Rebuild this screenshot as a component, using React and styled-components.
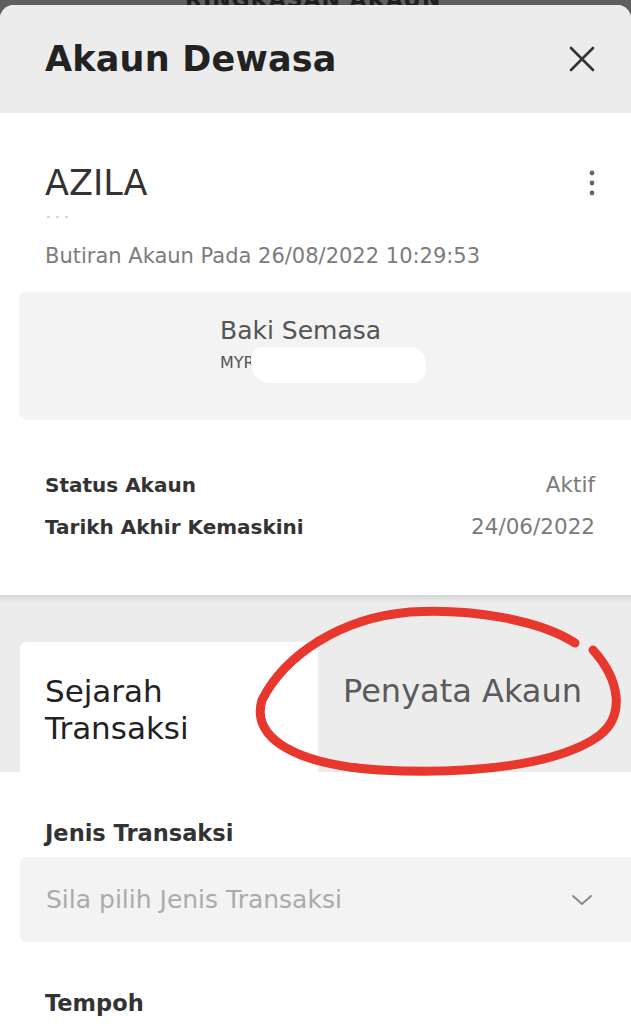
import styled, { createGlobalStyle } from "styled-components";

const GlobalStyle = createGlobalStyle`
  html, body {
    margin: 0;
    padding: 0;
    background: #5f5f5f;
  }
  * { box-sizing: border-box; }
`;

const Page = styled.div`
  width: 631px;
  height: 1024px;
  overflow: hidden;
  background: #5f5f5f;
  font-family: "DejaVu Sans", "Noto Sans", sans-serif;
  display: flex;
  flex-direction: column;
`;

const Backdrop = styled.div`
  height: 5px;
  flex: none;
  overflow: hidden;
  display: flex;
  align-items: flex-end;
  padding-left: 185px;
  color: #1e1e1e;
  font-weight: 700;
  font-size: 22px;
  line-height: 10px;
  letter-spacing: 1px;
`;

const Modal = styled.div`
  flex: 1;
  background: #fff;
  border-radius: 14px 14px 0 0;
  overflow: hidden;
`;

const Header = styled.div`
  height: 108px;
  background: #ececec;
  display: flex;
  align-items: center;
  justify-content: space-between;
  padding: 0 36px 0 45px;
`;

const Title = styled.h1`
  margin: 0;
  font-size: 35px;
  font-weight: 700;
  color: #222;
  letter-spacing: 0.2px;
`;

const IconButton = styled.button`
  border: none;
  background: none;
  padding: 0;
  display: flex;
  color: #333;
`;

const Summary = styled.section`
  padding: 50px 36px 0 45px;
`;

const NameRow = styled.div`
  display: flex;
  align-items: center;
  justify-content: space-between;
`;

const Name = styled.div`
  font-size: 35px;
  line-height: 40px;
  color: #333;
`;

const Redacted = styled.div`
  height: 28px;
  display: flex;
  align-items: center;
  gap: 6px;
  padding-left: 2px;
  span {
    width: 3px;
    height: 2px;
    background: #d8d8d8;
  }
`;

const Timestamp = styled.div`
  margin-top: 13px;
  font-size: 21px;
  line-height: 24px;
  color: #7c7c7c;
`;

const BalanceCard = styled.div`
  margin: 24px -60px 0 -25px;
  height: 126px;
  background: #f3f3f3;
  border-radius: 6px;
  box-shadow: 0 1px 3px rgba(0, 0, 0, 0.08);
  padding: 24px 0 0 200px;
`;

const BalanceLabel = styled.div`
  font-size: 25px;
  line-height: 30px;
  color: #555;
`;

const BalanceValue = styled.div`
  margin-top: 7px;
  display: flex;
  align-items: flex-start;
  font-size: 16px;
  line-height: 20px;
  color: #555;
`;

const WhiteOut = styled.span`
  display: inline-block;
  width: 175px;
  height: 36px;
  margin-left: -4px;
  margin-top: -6px;
  background: #fff;
  border-radius: 10px 16px 14px 20px;
`;

const InfoList = styled.div`
  padding: 55px 0 56px;
  display: flex;
  flex-direction: column;
  gap: 18px;
`;

const InfoRow = styled.div`
  display: flex;
  justify-content: space-between;
  align-items: baseline;
  line-height: 24px;
`;

const InfoLabel = styled.span`
  font-size: 20px;
  font-weight: 700;
  color: #333;
`;

const InfoValue = styled.span`
  font-size: 21.5px;
  color: #7a7a7a;
`;

const TabBar = styled.div`
  position: relative;
  background: #ececec;
  padding: 47px 0 0 20px;
  display: flex;
  box-shadow: inset 0 7px 6px -5px rgba(0, 0, 0, 0.14);
`;

const Tab = styled.div`
  width: ${(p) => (p.$active ? "298px" : "auto")};
  flex: ${(p) => (p.$active ? "none" : "1")};
  height: 130px;
  padding: 31px 25px 0;
  background: ${(p) => (p.$active ? "#fff" : "transparent")};
  border-radius: 6px 0 0 0;
  font-size: ${(p) => (p.$active ? "31px" : "32px")};
  line-height: 37px;
  color: ${(p) => (p.$active ? "#222" : "#5a5a5a")};
`;

const Scribble = styled.svg`
  position: absolute;
  left: 0;
  top: 0;
  pointer-events: none;
`;

const Form = styled.section`
  padding: 47px 0 0;
`;

const FieldLabel = styled.div`
  padding-left: 45px;
  font-size: 22.5px;
  font-weight: 700;
  color: #333;
  line-height: 28px;
`;

const Select = styled.div`
  margin: 10px 0 0 20px;
  height: 85px;
  background: #f3f3f3;
  border-radius: 6px 0 0 6px;
  display: flex;
  align-items: center;
  justify-content: space-between;
  padding: 0 38px 0 26px;
  font-size: 25px;
  color: #ababab;
`;

const Spacer = styled.div`
  height: ${(p) => p.$h}px;
`;

const CloseIcon = () => (
  <svg width="26" height="26" viewBox="0 0 26 26" fill="none" stroke="#333" strokeWidth="2.6" strokeLinecap="round">
    <path d="M2 2 L24 24 M24 2 L2 24" />
  </svg>
);

const DotsIcon = () => (
  <svg width="6" height="26" viewBox="0 0 6 26" fill="#666">
    <circle cx="3" cy="3" r="2.4" />
    <circle cx="3" cy="13" r="2.4" />
    <circle cx="3" cy="23" r="2.4" />
  </svg>
);

const Chevron = () => (
  <svg width="22" height="12" viewBox="0 0 22 12" fill="none" stroke="#8a8a8a" strokeWidth="2" strokeLinecap="round" strokeLinejoin="round">
    <path d="M2 2 L11 10 L20 2" />
  </svg>
);

export default function App() {
  return (
    <Page>
      <GlobalStyle />
      <Backdrop>RINGKASAN AKAUN</Backdrop>
      <Modal>
        <Header>
          <Title>Akaun Dewasa</Title>
          <IconButton aria-label="Tutup">
            <CloseIcon />
          </IconButton>
        </Header>

        <Summary>
          <NameRow>
            <Name>AZILA</Name>
            <IconButton aria-label="Menu">
              <DotsIcon />
            </IconButton>
          </NameRow>
          <Redacted>
            <span />
            <span />
            <span />
          </Redacted>
          <Timestamp>Butiran Akaun Pada 26/08/2022 10:29:53</Timestamp>

          <BalanceCard>
            <BalanceLabel>Baki Semasa</BalanceLabel>
            <BalanceValue>
              MYR
              <WhiteOut />
            </BalanceValue>
          </BalanceCard>

          <InfoList>
            <InfoRow>
              <InfoLabel>Status Akaun</InfoLabel>
              <InfoValue>Aktif</InfoValue>
            </InfoRow>
            <InfoRow>
              <InfoLabel>Tarikh Akhir Kemaskini</InfoLabel>
              <InfoValue>24/06/2022</InfoValue>
            </InfoRow>
          </InfoList>
        </Summary>

        <TabBar>
          <Tab $active>Sejarah Transaksi</Tab>
          <Tab>Penyata Akaun</Tab>
          <Scribble width="631" height="190" viewBox="0 595 631 190">
            <path
              d="M575 643 C540 620 470 608 410 612 C340 618 285 655 262 700 C250 740 300 765 380 770 C470 775 560 765 600 735 C625 715 620 680 593 650"
              fill="none"
              stroke="#e8372c"
              strokeWidth="9"
              strokeLinecap="round"
            />
          </Scribble>
        </TabBar>

        <Form>
          <FieldLabel>Jenis Transaksi</FieldLabel>
          <Select>
            Sila pilih Jenis Transaksi
            <Chevron />
          </Select>
          <Spacer $h={47} />
          <FieldLabel>Tempoh</FieldLabel>
        </Form>
      </Modal>
    </Page>
  );
}
